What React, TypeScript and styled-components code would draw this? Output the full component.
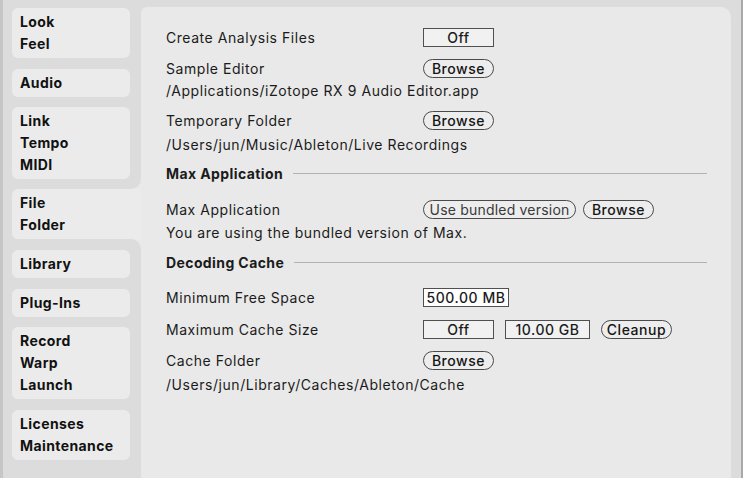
import React from 'react';
import styled, { createGlobalStyle } from 'styled-components';

const GlobalStyle = createGlobalStyle`
  html, body {
    margin: 0;
    padding: 0;
    height: 100%;
    overflow: hidden;
  }
  body {
    font-family: 'Inter', 'Noto Sans', sans-serif;
    color: #1b1b1b;
    letter-spacing: 0.55px;
  }
  #root {
    height: 100%;
  }
`;

const Window = styled.div`
  display: flex;
  height: 100vh;
  background-color: #dcdcdc;
  border-left: 3px solid #c6c6c6;
  border-right: 2px solid #a9a9a9;
  box-sizing: border-box;
`;

const Sidebar = styled.nav`
  width: 138px;
  display: flex;
  flex-direction: column;
  background-color: #e9e9e9;
`;

const TabGroup = styled.div<{ $position: 'top' | 'bottom' }>`
  display: flex;
  flex-direction: column;
  gap: 10.5px;
  background-color: #dcdcdc;
  padding: ${(p) => (p.$position === 'top' ? '8px 8px 10px 9px' : '11px 8px 0 9px')};
  border-bottom-right-radius: ${(p) => (p.$position === 'top' ? '10px' : '0')};
  border-top-right-radius: ${(p) => (p.$position === 'bottom' ? '10px' : '0')};
  flex: ${(p) => (p.$position === 'bottom' ? 1 : 'none')};
`;

const SelectedRow = styled.div`
  background-color: #dcdcdc;
  padding-left: 9px;
`;

const Tab = styled.div<{ $selected?: boolean }>`
  width: ${(p) => (p.$selected ? '129px' : '118px')};
  box-sizing: border-box;
  padding: 3px 8px;
  background-color: #ebebeb;
  border-radius: ${(p) => (p.$selected ? '6px 0 0 6px' : '6px')};
  font-weight: 700;
  font-size: 14px;
  line-height: 22px;
  letter-spacing: 0.4px;
  color: #111;
`;

const Panel = styled.main`
  flex: 1;
  margin-top: 7px;
  background-color: #e9e9e9;
  border-radius: 6px 10px 0 0;
  padding: 21px 24px 0 25px;
  font-size: 14px;
`;

const RightGutter = styled.div`
  width: 10px;
`;

const Row = styled.div<{ $mt: number }>`
  display: flex;
  align-items: center;
  height: 19px;
  margin-top: ${(p) => p.$mt}px;
`;

const Label = styled.div`
  width: 257px;
  flex: none;
  line-height: 19px;
`;

const Controls = styled.div<{ $gap: number }>`
  display: flex;
  align-items: center;
  gap: ${(p) => p.$gap}px;
`;

const TextLine = styled.div<{ $mt: number }>`
  line-height: 19px;
  margin-top: ${(p) => p.$mt}px;
`;

const SectionHeader = styled.div<{ $mt: number }>`
  display: flex;
  align-items: center;
  gap: 10px;
  height: 19px;
  margin-top: ${(p) => p.$mt}px;
  font-weight: 700;
  letter-spacing: 0.4px;

  &::after {
    content: '';
    flex: 1;
    height: 1px;
    background-color: #b3b3b3;
  }
`;

const ValueBox = styled.div<{ $width: number; $white?: boolean }>`
  width: ${(p) => p.$width}px;
  height: 19px;
  box-sizing: border-box;
  border: 1px solid #505050;
  background-color: ${(p) => (p.$white ? '#ffffff' : '#f1f1f1')};
  display: flex;
  align-items: center;
  justify-content: center;
  font-weight: 500;
  font-size: 14px;
`;

const PillButton = styled.div<{ $width: number; $muted?: boolean }>`
  width: ${(p) => p.$width}px;
  height: 19px;
  box-sizing: border-box;
  border: 1px solid #4a4a4a;
  border-radius: 10px;
  background-color: #ededed;
  display: flex;
  align-items: center;
  justify-content: center;
  font-weight: ${(p) => (p.$muted ? 400 : 500)};
  color: ${(p) => (p.$muted ? '#3a3a3a' : '#151515')};
  font-size: 14px;
  letter-spacing: ${(p) => (p.$muted ? '0.2px' : '0.55px')};
`;

const topTabs = [['Look', 'Feel'], ['Audio'], ['Link', 'Tempo', 'MIDI']];
const bottomTabs = [['Library'], ['Plug-Ins'], ['Record', 'Warp', 'Launch'], ['Licenses', 'Maintenance']];

const renderTab = (lines: string[]) => (
  <Tab key={lines.join('-')}>
    {lines.map((l) => (
      <div key={l}>{l}</div>
    ))}
  </Tab>
);

const App: React.FC = () => {
  return (
    <>
      <GlobalStyle />
      <Window>
        <Sidebar>
          <TabGroup $position="top">{topTabs.map(renderTab)}</TabGroup>
          <SelectedRow>
            <Tab $selected>
              <div>File</div>
              <div>Folder</div>
            </Tab>
          </SelectedRow>
          <TabGroup $position="bottom">{bottomTabs.map(renderTab)}</TabGroup>
        </Sidebar>

        <Panel>
          <Row $mt={0}>
            <Label>Create Analysis Files</Label>
            <ValueBox $width={71}>Off</ValueBox>
          </Row>
          <Row $mt={12}>
            <Label>Sample Editor</Label>
            <PillButton $width={71}>Browse</PillButton>
          </Row>
          <TextLine $mt={3}>/Applications/iZotope RX 9 Audio Editor.app</TextLine>
          <Row $mt={11}>
            <Label>Temporary Folder</Label>
            <PillButton $width={71}>Browse</PillButton>
          </Row>
          <TextLine $mt={5}>/Users/jun/Music/Ableton/Live Recordings</TextLine>

          <SectionHeader $mt={10}>Max Application</SectionHeader>
          <Row $mt={17}>
            <Label>Max Application</Label>
            <Controls $gap={7}>
              <PillButton $width={153} $muted>
                Use bundled version
              </PillButton>
              <PillButton $width={71}>Browse</PillButton>
            </Controls>
          </Row>
          <TextLine $mt={4}>You are using the bundled version of Max.</TextLine>

          <SectionHeader $mt={11}>Decoding Cache</SectionHeader>
          <Row $mt={16}>
            <Label>Minimum Free Space</Label>
            <ValueBox $width={86} $white>
              500.00 MB
            </ValueBox>
          </Row>
          <Row $mt={13}>
            <Label>Maximum Cache Size</Label>
            <Controls $gap={11}>
              <ValueBox $width={71}>Off</ValueBox>
              <ValueBox $width={85}>10.00 GB</ValueBox>
              <PillButton $width={71}>Cleanup</PillButton>
            </Controls>
          </Row>
          <Row $mt={12}>
            <Label>Cache Folder</Label>
            <PillButton $width={71}>Browse</PillButton>
          </Row>
          <TextLine $mt={5}>/Users/jun/Library/Caches/Ableton/Cache</TextLine>
        </Panel>
        <RightGutter />
      </Window>
    </>
  );
};

export default App;
